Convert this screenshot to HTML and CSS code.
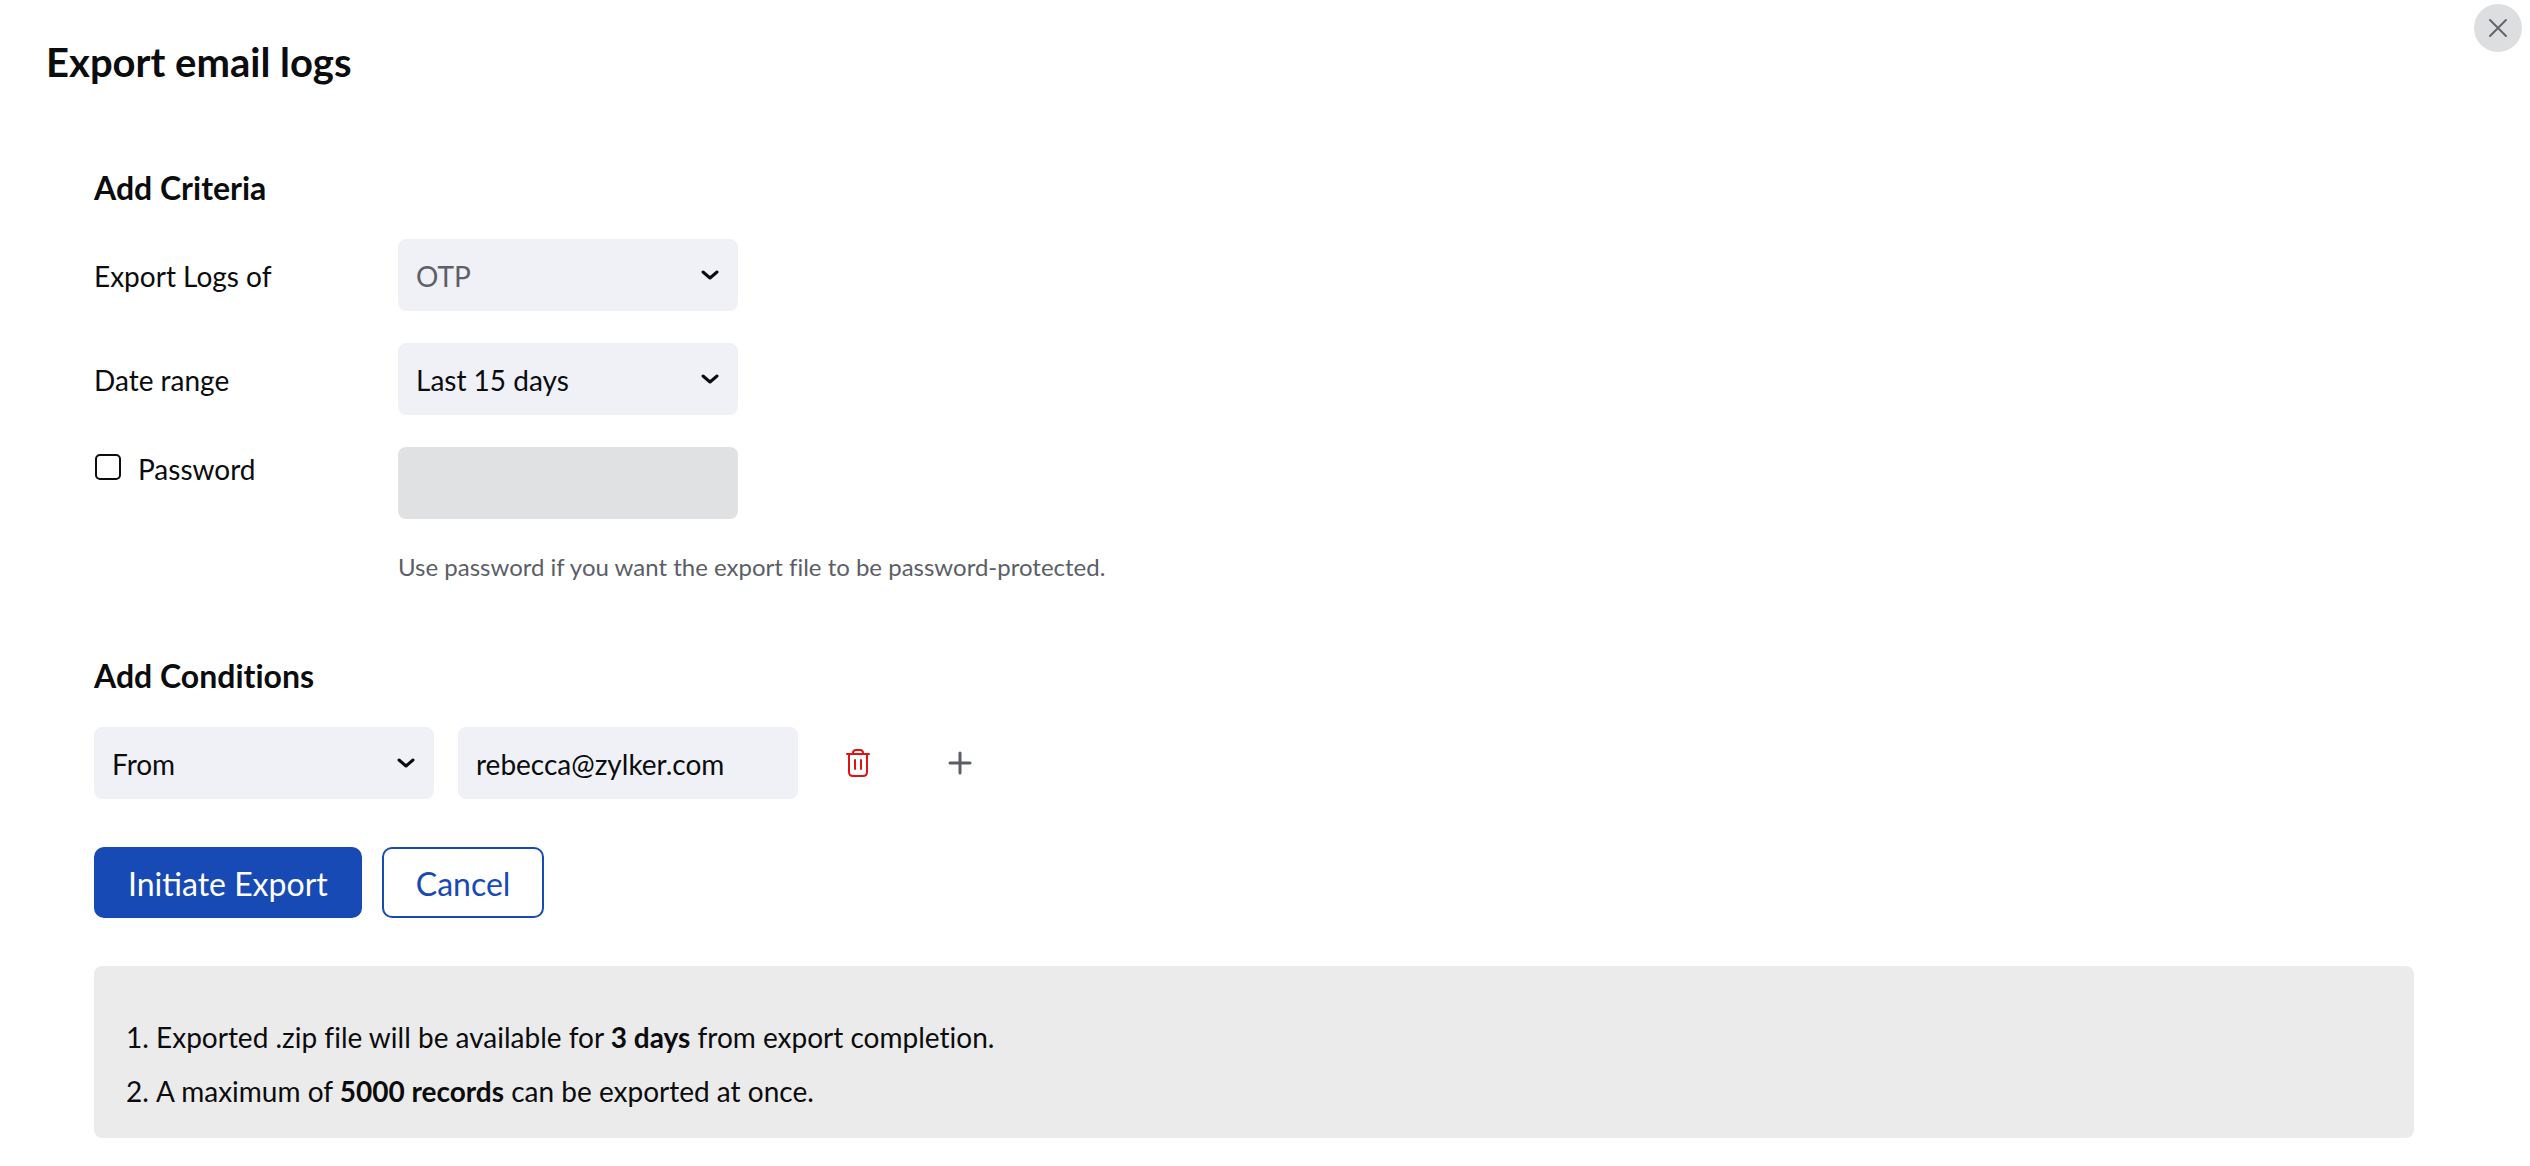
FILE: index.html
```html
<!DOCTYPE html>
<html lang="en">
<head>
    <meta charset="UTF-8">
    <meta name="viewport" content="width=device-width, initial-scale=1.0">
    <title>Export email logs</title>
    <link rel="stylesheet" href="styles.css">
</head>
<body>
    <button type="button" class="close-btn" aria-label="Close">
        <svg width="20" height="20" viewBox="0 0 20 20"><path d="M2 2l16 16M18 2L2 18"/></svg>
    </button>

    <h1>Export email logs</h1>

    <form class="export-form">
        <section class="criteria">
            <h2>Add Criteria</h2>

            <div class="form-row">
                <label for="log-type">Export Logs of</label>
                <div class="select-box">
                    <select id="log-type" disabled>
                        <option>OTP</option>
                    </select>
                    <svg class="arrow" width="18" height="12" viewBox="0 0 18 12"><path d="M2 3l7 6 7-6"/></svg>
                </div>
            </div>

            <div class="form-row">
                <label for="date-range">Date range</label>
                <div class="select-box">
                    <select id="date-range">
                        <option>Last 15 days</option>
                    </select>
                    <svg class="arrow" width="18" height="12" viewBox="0 0 18 12"><path d="M2 3l7 6 7-6"/></svg>
                </div>
            </div>

            <div class="form-row password-row">
                <label class="check-label" for="use-password">
                    <input type="checkbox" id="use-password">
                    Password
                </label>
                <div>
                    <input type="password" class="field" aria-label="Export password" disabled>
                    <p class="hint">Use password if you want the export file to be password-protected.</p>
                </div>
            </div>
        </section>

        <section class="conditions">
            <h2>Add Conditions</h2>

            <div class="condition-row">
                <div class="select-box">
                    <select aria-label="Condition field">
                        <option>From</option>
                    </select>
                    <svg class="arrow" width="18" height="12" viewBox="0 0 18 12"><path d="M2 3l7 6 7-6"/></svg>
                </div>
                <input type="text" class="field" aria-label="Condition value" value="rebecca@zylker.com">
                <button type="button" class="icon-btn delete" aria-label="Delete condition">
                    <svg width="28" height="32" viewBox="0 0 28 32">
                        <path d="M3 7h22M5 7v18q0 4 4 4h10q4 0 4-4V7M9 7V6q0-3 3-3h4q3 0 3 3v1M11 13v9M17 13v9"/>
                    </svg>
                </button>
                <button type="button" class="icon-btn add" aria-label="Add condition">
                    <svg width="28" height="28" viewBox="0 0 28 28"><path d="M14 4v20M4 14h20"/></svg>
                </button>
            </div>
        </section>

        <div class="actions">
            <button type="submit" class="btn primary">Initiate Export</button>
            <button type="button" class="btn">Cancel</button>
        </div>

        <ol class="notes">
            <li>Exported .zip file will be available for <b>3 days</b> from export completion.</li>
            <li>A maximum of <b>5000 records</b> can be exported at once.</li>
        </ol>
    </form>
</body>
</html>
```
FILE: styles.css
```css
* {
    margin: 0;
    padding: 0;
    box-sizing: border-box;
}

body {
    background: #fff;
    color: #0b0c0e;
    font-family: Lato, "Liberation Sans", sans-serif;
    font-size: 28px;
    line-height: 44px;
    font-variant-ligatures: none;
    padding: 38px 116px 28px 46px;
}

h1 {
    font-size: 40px;
    line-height: 48px;
    font-weight: 700;
}

h2 {
    font-size: 32px;
    line-height: 42px;
    font-weight: 700;
    margin-bottom: 30px;
}

button,
input,
select {
    font: inherit;
    color: inherit;
}

.close-btn {
    position: absolute;
    top: 4px;
    right: 8px;
    width: 48px;
    height: 48px;
    border: none;
    border-radius: 50%;
    background: #dddee0;
    display: flex;
    align-items: center;
    justify-content: center;
    cursor: pointer;
}

.close-btn svg {
    fill: none;
    stroke: #62656d;
    stroke-width: 2;
    stroke-linecap: round;
}

.export-form {
    margin: 81px 0 0 48px;
}

.form-row {
    display: flex;
    align-items: center;
    margin-bottom: 32px;
}

.form-row > label {
    width: 304px;
    padding-top: 2px;
}

.password-row {
    align-items: flex-start;
    margin-bottom: 0;
}

.form-row > .check-label {
    display: flex;
    align-items: center;
    gap: 16px;
    padding-top: 0;
}

.check-label input {
    appearance: none;
    width: 26px;
    height: 26px;
    margin: 0 1px 4px;
    border: 2px solid #0b0c0e;
    border-radius: 5px;
    background: #fff;
}

.select-box {
    position: relative;
    width: 340px;
}

select,
.field {
    display: block;
    width: 340px;
    height: 72px;
    padding: 2px 18px 0;
    border: none;
    border-radius: 8px;
    background: #f0f1f7;
    appearance: none;
}

select:disabled {
    color: #5e6066;
    opacity: 1;
}

.field:disabled {
    background: #e0e1e3;
}

.arrow {
    position: absolute;
    right: 19px;
    top: 30px;
    fill: none;
    stroke: #0b0c0e;
    stroke-width: 3;
    stroke-linecap: round;
    stroke-linejoin: round;
    pointer-events: none;
}

.hint {
    margin-top: 32px;
    font-size: 24px;
    line-height: 32px;
    color: #5b5e66;
}

.conditions {
    margin-top: 72px;
}

.condition-row {
    display: flex;
    align-items: center;
}

.condition-row .field {
    margin-left: 24px;
}

.icon-btn {
    display: flex;
    border: none;
    background: none;
    cursor: pointer;
}

.icon-btn svg {
    fill: none;
    stroke: currentColor;
    stroke-width: 2;
    stroke-linecap: round;
    stroke-linejoin: round;
}

.delete {
    margin-left: 46px;
    color: #dc1414;
}

.add {
    margin-left: 74px;
    color: #5b5e66;
}

.add svg {
    stroke-width: 3;
}

.actions {
    display: flex;
    gap: 20px;
    margin-top: 48px;
}

.btn {
    height: 71px;
    padding: 2px 32px 0;
    border: 2px solid #174ab5;
    border-radius: 10px;
    background: #fff;
    color: #174ab5;
    font-size: 32px;
    font-variant-ligatures: normal;
    cursor: pointer;
}

.btn.primary {
    background: #174ab5;
    color: #fff;
}

.notes {
    margin-top: 48px;
    padding: 44px 32px 20px;
    border-radius: 8px;
    background: #ebebeb;
    list-style-position: inside;
}

.notes li {
    line-height: 54px;
}
```
